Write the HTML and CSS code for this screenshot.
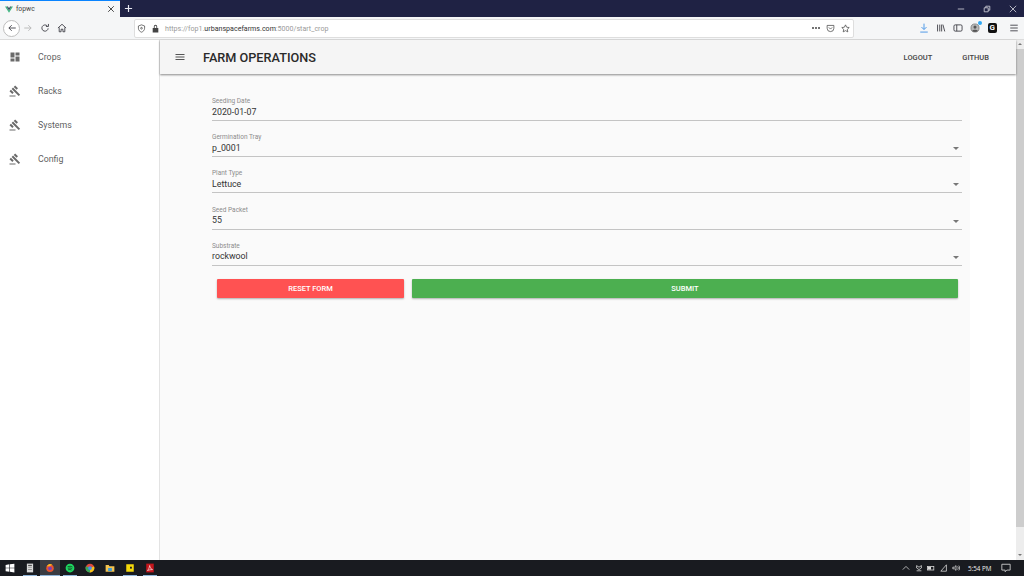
FILE: index.html
```html
<!DOCTYPE html>
<html lang="en">
<head>
<meta charset="utf-8">
<title>fopwc</title>
<link rel="stylesheet" href="styles.css">
</head>
<body>
<div class="tabstrip">
  <div class="tab">
    <svg class="tab-logo" viewBox="0 0 24 20"><path fill="#41b883" d="M0 1h5l7 12 7-12h5L12 20z"/><path fill="#35495e" d="M5 1h4l3 5 3-5h4l-7 12z"/></svg>
    <span class="tab-title">fopwc</span>
    <svg class="tab-close" viewBox="0 0 10 10"><path d="M1.500 1.500l7 7M8.500 1.500l-7 7"/></svg>
  </div>
  <svg class="new-tab" viewBox="0 0 10 10"><path d="M5 1v8M1 5h8"/></svg>
  <div class="window-controls">
    <svg viewBox="0 0 10 10"><path d="M1 5h8"/></svg>
    <svg viewBox="0 0 10 10"><path d="M1.500 3.500h5v5h-5zM3.500 3.500v-2h5v5h-2"/></svg>
    <svg viewBox="0 0 10 10"><path d="M1 1l8 8M9 1l-8 8"/></svg>
  </div>
</div>
<div class="toolbar">
  <div class="back-btn"><svg class="tool-icon" viewBox="0 0 16 16"><path d="M14 8H3M7.500 3.500L3 8l4.500 4.500"/></svg></div>
  <svg class="tool-icon faded" viewBox="0 0 16 16"><path d="M2 8h11M8.500 3.500L13 8l-4.500 4.500"/></svg>
  <svg class="tool-icon" viewBox="0 0 16 16"><path d="M13 8.500A5 5 0 1 1 11.500 4.500M13.500 1.500v4h-4"/></svg>
  <svg class="tool-icon" viewBox="0 0 16 16"><path d="M1.500 8L8 2l6.500 6M3.500 7v7h3v-4h3v4h3V7"/></svg>
  <div class="urlbar">
    <svg class="url-icon" viewBox="0 0 16 16"><path d="M8 1.500l5.500 2v4c0 3.500-2.500 6-5.500 7-3-1-5.500-3.500-5.500-7v-4z"/><circle cx="8" cy="7.500" r="1.500"/></svg>
    <svg class="url-icon solid" viewBox="0 0 16 16"><path d="M3 7h10v8H3zM5 7V4.500a3 3 0 0 1 6 0V7H9.500V4.500a1.500 1.500 0 0 0-3 0V7z"/></svg>
    <span class="url"><span>https://fop1.</span><b>urbanspacefarms.com</b><span>:5000/start_crop</span></span>
    <span class="url-dots"><i></i><i></i><i></i></span>
    <svg class="url-icon" viewBox="0 0 16 16"><path d="M2 2.500h12v5a6 6 0 0 1-12 0zM5 6l3 3 3-3"/></svg>
    <svg class="url-icon" viewBox="0 0 16 16"><path d="M8 1.500l2 4.200 4.600.6-3.400 3.200.9 4.500L8 11.800 3.900 14l.9-4.500L1.400 6.300 6 5.700z"/></svg>
  </div>
  <div class="tool-right">
    <svg class="tool-icon blue" viewBox="0 0 16 16"><path d="M8 1v9M4 6.500L8 10.500l4-4M2 14.500h12"/></svg>
    <svg class="tool-icon" viewBox="0 0 16 16"><path d="M2.500 2.500v11M6 2.500v11M9 2.500v11M11 2.500l3 11"/></svg>
    <svg class="tool-icon" viewBox="0 0 16 16"><rect x="1.500" y="3" width="13" height="10" rx="2"/><path d="M6 3v10"/></svg>
    <span class="avatar"><svg class="tool-icon" viewBox="0 0 16 16"><circle class="disc" cx="8" cy="8" r="6.500"/><circle class="fill" cx="8" cy="6.500" r="2.500"/><path class="fill" d="M3.500 12.500c1-2.500 8-2.500 9 0-2 2.500-7 2.500-9 0z"/></svg><i class="avatar-dot"></i></span>
    <span class="ext-badge">G</span>
    <svg class="tool-icon menu-last" viewBox="0 0 16 16"><path d="M2 3.500h12M2 8h12M2 12.500h12"/></svg>
  </div>
</div>
<div class="page">
  <nav class="sidebar">
    <a class="nav-item"><svg class="nav-icon" viewBox="0 0 24 24"><path d="M3 13h8V3H3v10zm0 8h8v-6H3v6zm10 0h8V11h-8v10zm0-18v6h8V3h-8z"/></svg><span>Crops</span></a>
    <a class="nav-item"><svg class="nav-icon" viewBox="0 0 24 24"><path d="M1 21h12v2H1zM5.245 8.070l2.830-2.827 14.140 14.142-2.828 2.828zM12.317 1l5.657 5.656-2.830 2.830-5.654-5.660zM3.825 9.485l5.657 5.657-2.828 2.828-5.657-5.657z"/></svg><span>Racks</span></a>
    <a class="nav-item"><svg class="nav-icon" viewBox="0 0 24 24"><path d="M1 21h12v2H1zM5.245 8.070l2.830-2.827 14.140 14.142-2.828 2.828zM12.317 1l5.657 5.656-2.830 2.830-5.654-5.660zM3.825 9.485l5.657 5.657-2.828 2.828-5.657-5.657z"/></svg><span>Systems</span></a>
    <a class="nav-item"><svg class="nav-icon" viewBox="0 0 24 24"><path d="M1 21h12v2H1zM5.245 8.070l2.830-2.827 14.140 14.142-2.828 2.828zM12.317 1l5.657 5.656-2.830 2.830-5.654-5.660zM3.825 9.485l5.657 5.657-2.828 2.828-5.657-5.657z"/></svg><span>Config</span></a>
  </nav>
  <div class="main">
    <header class="appbar">
      <svg class="burger" viewBox="0 0 24 24"><path d="M3 18h18v-2H3v2zm0-5h18v-2H3v2zm0-7v2h18V6H3z"/></svg>
      <h1 class="app-title">FARM OPERATIONS</h1>
      <a class="app-link first">LOGOUT</a>
      <a class="app-link">GITHUB</a>
    </header>
    <div class="content">
      <form class="form">
        <div class="field"><label>Seeding Date</label><div class="value"><span>2020-01-07</span></div></div>
        <div class="field"><label>Germination Tray</label><div class="value"><span>p_0001</span><i class="caret"></i></div></div>
        <div class="field"><label>Plant Type</label><div class="value"><span>Lettuce</span><i class="caret"></i></div></div>
        <div class="field"><label>Seed Packet</label><div class="value"><span>55</span><i class="caret"></i></div></div>
        <div class="field"><label>Substrate</label><div class="value"><span>rockwool</span><i class="caret"></i></div></div>
        <div class="actions">
          <button type="button" class="btn reset">RESET FORM</button>
          <button type="button" class="btn submit">SUBMIT</button>
        </div>
      </form>
    </div>
  </div>
  <div class="scrollbar"><span class="scroll-up"></span><span class="scroll-thumb"></span><span class="scroll-down"></span></div>
</div>
<footer class="taskbar">
  <svg class="start" viewBox="0 0 16 16"><path d="M1 3l6-1v5.500H1zM8 1.800L15 1v6.500H8zM1 8.500h6V14l-6-1zM8 8.500h7V15l-7-1z"/></svg>
  <div class="task-apps">
    <span class="task running"><svg viewBox="0 0 16 16"><rect x="3" y="1" width="10" height="14" fill="#d8d8d8"/><rect x="5" y="3" width="6" height="2" fill="#555"/><path d="M5 7h6v1H5zM5 10h6v1H5z" fill="#777"/></svg></span>
    <span class="task active running"><svg viewBox="0 0 16 16"><circle cx="8" cy="8.500" r="6" fill="#e8542e"/><circle cx="8" cy="8.500" r="3" fill="#7b3fb8"/><path d="M3 5c2-4 7-4 9-2-2 0-3 1-4 2z" fill="#ffb21f"/></svg></span>
    <span class="task running"><svg viewBox="0 0 16 16"><circle cx="8" cy="8" r="7" fill="#1ed760"/><path d="M4 6c3-1 6-1 8 .5M4.500 8.500c2.500-.8 5-.6 7 .5M5 10.800c2-.6 4-.4 5.500.4" stroke="#111" fill="none"/></svg></span>
    <span class="task"><svg viewBox="0 0 16 16"><circle cx="8" cy="8" r="7" fill="#de4b3b"/><path d="M8 8L14.500 5.500A7 7 0 0 1 8 15z" fill="#f5c518"/><path d="M8 8L8 15A7 7 0 0 1 1.500 5z" fill="#3aa757"/><circle cx="8" cy="8" r="3" fill="#4a8cf0"/></svg></span>
    <span class="task"><svg viewBox="0 0 16 16"><path d="M1 3h5l1 2h8v9H1z" fill="#f3c24f"/><rect x="5" y="8" width="6" height="5" fill="#3f9bd9"/></svg></span>
    <span class="task running"><svg viewBox="0 0 16 16"><rect x="2" y="2" width="12" height="12" fill="#f5d90a"/><rect x="8" y="6" width="3" height="3" fill="#222"/></svg></span>
    <span class="task running"><svg viewBox="0 0 16 16"><rect x="2" y="1" width="12" height="14" fill="#c4161c"/><path d="M4 12c2-2 3-5 3.500-8 .5 3 2 6 4.500 6.500-3 0-5 .5-8 1.500z" fill="none" stroke="#fff"/></svg></span>
  </div>
  <div class="tray">
    <svg viewBox="0 0 10 10"><path d="M1 7l4-4 4 4"/></svg>
    <svg viewBox="0 0 10 10"><path d="M2 2l3 2 3-2v3L5 7 2 5zM2 8.500h6"/></svg>
    <svg viewBox="0 0 10 10"><rect x=".5" y="3" width="8" height="4.500"/><rect class="fill" x="1" y="3.500" width="4" height="3.500"/></svg>
    <svg viewBox="0 0 10 10"><path d="M1 9L8 1v8z"/></svg>
    <svg viewBox="0 0 10 10"><path d="M1 4h2l2-2v6L3 6H1zM7 3c1 1 1 3 0 4M8.500 2c1.500 2 1.500 4 0 6"/></svg>
    <span class="clock">5:54 PM</span>
    <svg class="notify" viewBox="0 0 12 12"><path d="M1 1.500h10v7H7l-2 2v-2H1z"/></svg>
  </div>
</footer>
</body>
</html>
```
FILE: styles.css
```css
* { box-sizing: border-box; }
html, body { margin: 0; height: 100%; overflow: hidden; }
body { display: flex; flex-direction: column; width: 1024px; height: 576px; font-family: Roboto, "Liberation Sans", sans-serif; background: #fff; }
svg { display: block; flex: none; }

.tabstrip { display: flex; align-items: center; height: 17px; background: #1f2244; flex: none; }
.tab { display: flex; align-items: center; width: 120px; height: 17px; background: #f5f6f7; border-top: 1px solid #0a84ff; padding-left: 5px; }
.tab-logo { width: 8px; height: 7px; }
.tab-title { margin-left: 3px; font-size: 6.800px; color: #444; flex: 1; }
.tab-close { width: 8px; height: 8px; margin-right: 5px; fill: none; stroke: #444; stroke-width: 1.200; }
.new-tab { width: 9px; height: 9px; margin-left: 4px; fill: none; stroke: #e8e8f0; stroke-width: 1.300; }
.window-controls { display: flex; gap: 18px; margin-left: auto; margin-right: 7px; }
.window-controls svg { width: 8px; height: 8px; fill: none; stroke: #d8d8e0; stroke-width: 1; }

.toolbar { display: flex; align-items: center; height: 23px; background: #f5f6f7; border-bottom: 1px solid #dcdcdc; flex: none; padding-left: 3px; }
.tool-icon { width: 10px; height: 10px; fill: none; stroke: #3c3c44; stroke-width: 1.400; }
.toolbar > .tool-icon { margin-left: 7px; }
.toolbar > .tool-icon.faded { stroke: #b5b5b5; margin-left: 3px; }
.back-btn { display: flex; align-items: center; justify-content: center; width: 17px; height: 17px; border-radius: 50%; border: 1px solid #bdbdbd; background: #fff; }
.urlbar { display: flex; align-items: center; width: 720px; height: 19px; margin-left: 67px; padding: 0 3px 0 2px; background: #fff; border: 1px solid #dedede; border-radius: 2px; }
.url-icon { width: 9px; height: 9px; fill: none; stroke: #444; stroke-width: 1.300; margin-right: 5px; }
.url-icon.solid { fill: #444; stroke: none; }
.url-icon:last-child { margin-right: 0; margin-left: 1px; }
.url { font-size: 7.100px; color: #9a9a9a; flex: 1; }
.url b { font-weight: 400; color: #333; }
.url-dots { display: flex; gap: 1px; margin-right: 6px; }
.url-dots i { display: block; width: 2px; height: 2px; border-radius: 50%; background: #444; }
.tool-right { display: flex; align-items: center; gap: 7.300px; margin-left: auto; margin-right: 5px; }
.tool-icon.blue { stroke: #3a8ee6; }
.avatar { position: relative; display: block; }
.avatar .tool-icon { stroke: #777; stroke-width: 1.200; }
.avatar .disc { fill: #b8b8b8; }
.avatar .fill { fill: #555; stroke: none; }
.avatar-dot { position: absolute; top: -2px; right: -2px; width: 4px; height: 4px; border-radius: 50%; background: #2fa8f5; }
.ext-badge { display: block; width: 9px; height: 10px; border-radius: 2px; background: #111; color: #fff; font-size: 8px; font-weight: 700; line-height: 10px; text-align: center; }
.menu-last { margin-left: 5px; }

.page { display: flex; flex: 1; min-height: 0; }
.sidebar { width: 160px; flex: none; background: #fff; border-right: 1px solid #e3e3e3; display: flex; flex-direction: column; }
.nav-item { display: flex; align-items: center; height: 34px; padding-left: 9px; font-size: 8.800px; color: #5f5f5f; }
.nav-icon { width: 12px; height: 12px; fill: #6a6a6a; margin-right: 17px; }

.main { flex: 1; min-width: 0; display: flex; flex-direction: column; background: #fff; }
.appbar { display: flex; align-items: center; height: 34px; background: #f5f5f5; box-shadow: 0 1px 2px rgba(0,0,0,.45); position: relative; padding-left: 14px; flex: none; }
.burger { width: 12px; height: 12px; fill: #555; }
.app-title { margin: 0 0 0 17px; font-size: 12.700px; font-weight: 500; color: #2a2a2a; }
.app-link { font-size: 7.500px; font-weight: 500; color: #444; }
.app-link.first { margin-left: auto; }
.app-link + .app-link { margin-left: 30px; margin-right: 27px; }

.content { width: 810px; flex: 1; background: #fafafa; padding: 21.500px 8px 0 52px; }
.form { display: flex; flex-direction: column; }
.field { height: 36.200px; display: flex; flex-direction: column; }
.field label { font-size: 6.500px; line-height: 9px; color: #8c8c8c; padding-top: 1.500px; height: 10.500px; }
.value { display: flex; align-items: center; justify-content: space-between; height: 15px; font-size: 8.800px; color: #333; border-bottom: 1px solid #c4c4c4; padding: 0 3px 3px 0; }
.caret { display: block; width: 0; height: 0; border-left: 3px solid transparent; border-right: 3px solid transparent; border-top: 3px solid #777; margin-top: 2px; }

.actions { display: flex; gap: 8px; padding: 0 4px 0 5px; margin-top: 2.500px; }
.btn { height: 19px; border: 0; border-radius: 1px; color: #fff; font: 500 7.500px Roboto, sans-serif; box-shadow: 0 1px 2px rgba(0,0,0,.3); }
.reset { width: 187px; background: #ff5252; }
.submit { flex: 1; background: #4caf50; }

.scrollbar { width: 8px; flex: none; background: #ededed; display: flex; flex-direction: column; align-items: center; }
.scroll-up, .scroll-down { width: 8px; height: 9px; flex: none; position: relative; }
.scroll-up::after { content: ""; position: absolute; left: 2px; top: 3px; border-left: 2px solid transparent; border-right: 2px solid transparent; border-bottom: 2px solid #777; }
.scroll-down { margin-top: auto; }
.scroll-down::after { content: ""; position: absolute; left: 2px; top: 3px; border-left: 2px solid transparent; border-right: 2px solid transparent; border-top: 2px solid #777; }
.scroll-thumb { flex: none; height: 478px; width: 8px; background: #cdcdcd; }

.taskbar { display: flex; align-items: center; height: 16px; background: #191b20; flex: none; }
.start { width: 10px; height: 10px; fill: #fff; margin-left: 5px; }
.task-apps { display: flex; margin-left: 5px; }
.task { display: flex; align-items: center; justify-content: center; width: 20px; height: 16px; position: relative; }
.task svg { width: 10px; height: 10px; }
.task.active { background: #3a3c42; }
.task.running::after { content: ""; position: absolute; left: 3px; right: 3px; bottom: 0; height: 1px; background: #8fb4d8; }
.task.active.running::after { left: 0; right: 0; }
.tray { display: flex; align-items: center; gap: 4.500px; margin-left: auto; color: #fff; }
.tray svg { width: 8px; height: 8px; fill: none; stroke: #d8d8d8; stroke-width: 1; }
.tray .fill { fill: #d8d8d8; stroke: none; }
.clock { font-size: 6.300px; color: #eee; margin-left: 3px; font-family: "Open Sans", sans-serif; }
.tray .notify { width: 10px; height: 10px; margin: 0 13px 0 5px; }
```
